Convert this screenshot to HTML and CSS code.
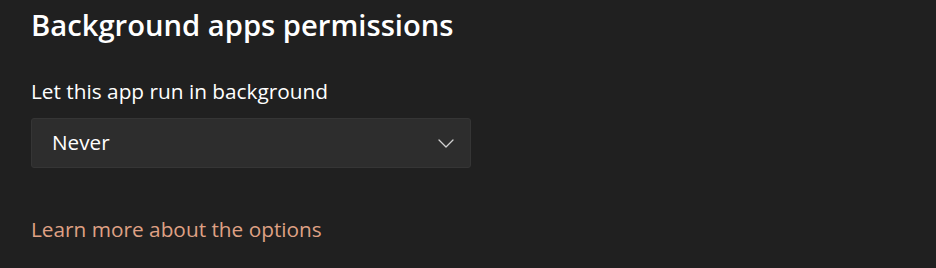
FILE: index.html
```html
<!DOCTYPE html>
<html lang="en">
<head>
<meta charset="utf-8">
<title>Background apps permissions</title>
<link rel="stylesheet" href="styles.css">
</head>
<body>
<main class="page">
  <h1 class="title">Background apps permissions</h1>
  <div class="field">
    <label class="label" for="bg-select">Let this app run in background</label>
    <div class="select" id="bg-select" role="combobox" aria-expanded="false">
      <span class="select-value">Never</span>
      <svg class="chevron" width="16" height="9" viewBox="0 0 16 9" aria-hidden="true">
        <path d="M1 1 L8 8 L15 1" fill="none" stroke="#d0d0d0" stroke-width="1.3" stroke-linecap="round" stroke-linejoin="round"/>
      </svg>
    </div>
  </div>
  <a class="link" href="#">Learn more about the options</a>
</main>
</body>
</html>
```

FILE: styles.css
```css
html, body {
  margin: 0;
  padding: 0;
  background: #202020;
}

body {
  font-family: "Open Sans", "Noto Sans", "Liberation Sans", sans-serif;
  color: #ffffff;
  width: 936px;
  height: 268px;
  overflow: hidden;
}

.page {
  padding: 7px 0 0 31px;
  display: flex;
  flex-direction: column;
  align-items: flex-start;
}

.title {
  margin: 0;
  font-size: 29.2px;
  line-height: 36px;
  font-weight: 600;
  color: #ffffff;
}

.field {
  margin-top: 34px;
  display: flex;
  flex-direction: column;
}

.label {
  font-size: 20.8px;
  line-height: 28px;
  color: #ffffff;
}

.select {
  margin-top: 13px;
  box-sizing: border-box;
  width: 440px;
  height: 50px;
  padding: 0 16px 0 20px;
  background: #2d2d2d;
  border: 1px solid #353535;
  border-radius: 3px;
  display: flex;
  align-items: center;
  justify-content: space-between;
}

.select-value {
  font-size: 20.7px;
  line-height: 28px;
  padding-bottom: 2px;
  color: #ffffff;
}

.chevron {
  display: block;
}

.link {
  margin-top: 47px;
  font-size: 20.8px;
  line-height: 28px;
  color: #dfa084;
  text-decoration: none;
}
```
